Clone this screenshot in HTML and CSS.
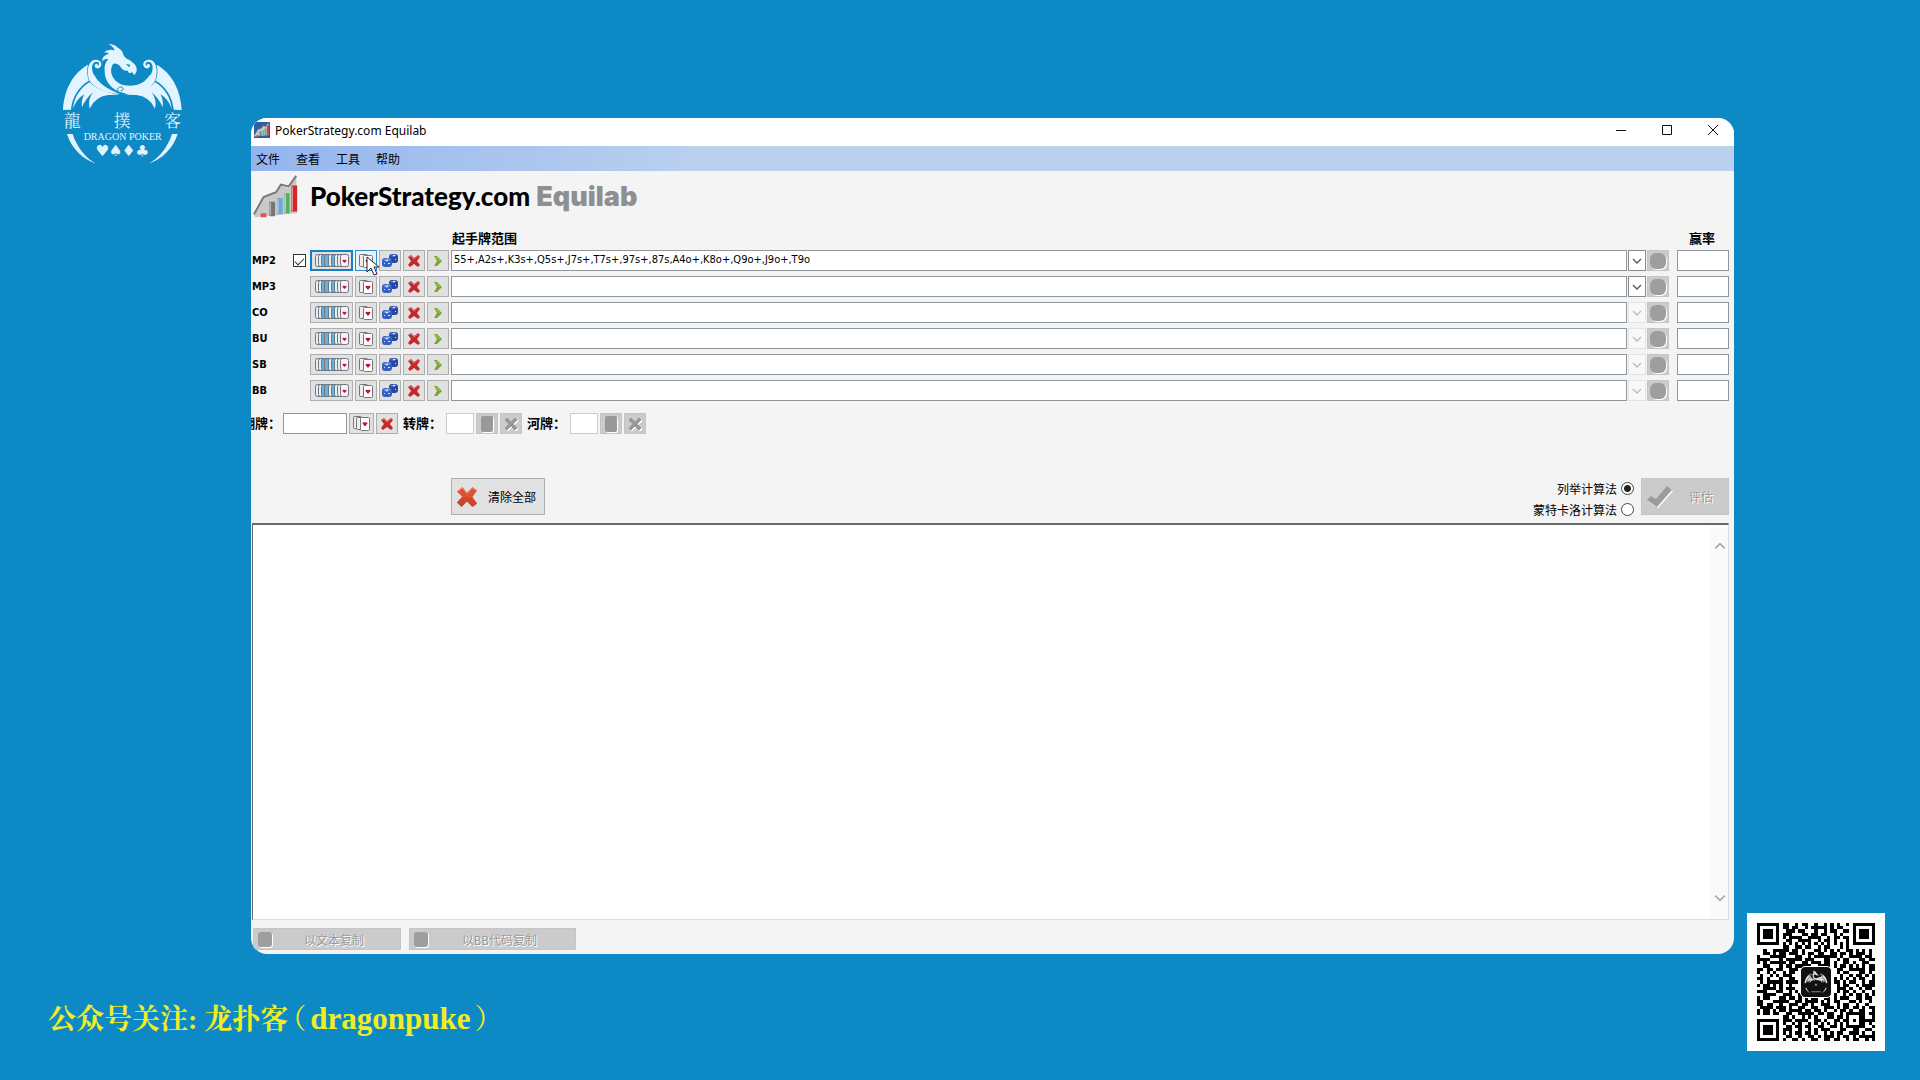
FILE: index.html
```html
<!DOCTYPE html>
<html lang="zh-CN">
<head>
    <meta charset="UTF-8">
    <meta name="viewport" content="width=device-width, initial-scale=1.0">
    <title>PokerStrategy.com Equilab</title>
    <link rel="stylesheet" href="styles.css">
</head>
<body>

<!-- Shared icons -->
<svg class="sprite" aria-hidden="true">
    <symbol id="chart" viewBox="0 0 50 50">
        <path d="M1 42 L11 24 L24 19 L29 12 L37 15 L45 1 L46 41 L2 45Z" fill="#c9c9c9"/>
        <path d="M1 42 L11 24 L24 19 L29 11 L37 13 L45 2" fill="none" stroke="#777" stroke-width="2"/>
        <path d="M8 41h6v4H8z" fill="#df5650"/>
        <path d="M17 29h6v15h-6z" fill="#777"/>
        <path d="M25 25h6v17h-6z" fill="#6ca8da"/>
        <path d="M33 20h5v21h-5z" fill="#4fae5a"/>
        <path d="M40 12h6v27h-6z" fill="#d3262b"/>
        <path d="M18 30v13M26 26v15M34 21v19M41 13v25" stroke="#fff" stroke-opacity=".6"/>
    </symbol>
    <symbol id="range" viewBox="0 0 34 14">
        <g fill="#e8edf0" stroke="#6c7782">
            <rect x=".5" y=".5" width="8" height="12" rx="2"/>
            <rect x="3.5" y=".5" width="8" height="12" rx="2"/>
            <rect x="6.5" y=".5" width="8" height="12" rx="2" fill="#69b0df"/>
            <rect x="9.5" y=".5" width="8" height="12" rx="2" fill="#69b0df"/>
            <rect x="13.5" y=".5" width="8" height="12" rx="2"/>
            <rect x="16.5" y=".5" width="8" height="12" rx="2" fill="#69b0df"/>
            <rect x="19.5" y=".5" width="8" height="12" rx="2"/>
            <rect x="22.5" y=".5" width="8" height="12" rx="2"/>
            <rect x="25.5" y=".5" width="8" height="12" rx="2" fill="#fbf0f3"/>
        </g>
        <path d="M29.500 9l-2-2q0-2 2-1q2-1 2 1z" fill="#b8173c"/>
    </symbol>
    <symbol id="cards" viewBox="0 0 14 14">
        <rect x=".5" y=".5" width="8" height="12" rx="1" fill="#eee" stroke="#777"/>
        <rect x="4.500" y="1.500" width="9" height="12" rx="1" fill="#fff" stroke="#777"/>
        <path d="M9 10L6.500 7q0-2 2.500-1q2.500-1 2.500 1z" fill="#b8173c"/>
    </symbol>
    <symbol id="flop" viewBox="0 0 17 15">
        <rect x=".5" y=".5" width="8" height="12" rx="1" fill="#eee" stroke="#777"/>
        <rect x="3.500" y="1.500" width="8" height="12" rx="1" fill="#eee" stroke="#777"/>
        <rect x="7.500" y="1.500" width="9" height="13" rx="1" fill="#fff" stroke="#777"/>
        <path d="M12 10.500L9.500 7.500q0-2 2.500-1q2.500-1 2.500 1z" fill="#b8173c"/>
    </symbol>
    <symbol id="dice" viewBox="0 0 18 14">
        <rect x="8" y="0" width="9" height="9" rx="3" fill="#2549a3"/>
        <path d="M9 2q4-3 7-1l-3 2z" fill="#6585d2"/>
        <rect x="1" y="4" width="10" height="9" rx="3" fill="#3560bd"/>
        <path d="M2 6q4-3 8-1L6 8z" fill="#7c9de6"/>
        <path d="M3 9h1v1H3zM7 9h2v1H7zM5 6h2v1H5zM14 5h1v1h-1zM12 1h2v1h-2z" fill="#dbe7ff"/>
    </symbol>
    <symbol id="cross" viewBox="0 0 14 14">
        <path d="M1 3l3-2 3 3 4-3 2 2-3 4 3 4-2 2-4-3-4 3-2-2 3-4z" fill="#c22b2e"/>
        <path d="M2 3l2-1 3 3 4-3" stroke="#df6b65" fill="none"/>
    </symbol>
    <symbol id="arrow" viewBox="0 0 10 12">
        <path d="M1 1h3l5 5-5 5H1l3-5z" fill="#7ba52f"/>
        <path d="M3 2l4 4" fill="none" stroke="#a8cf67"/>
    </symbol>
    <symbol id="down" viewBox="0 0 10 6">
        <path d="M1 1l4 4 4-4" fill="none" stroke="currentColor" stroke-width="1.300"/>
    </symbol>
    <symbol id="chip" viewBox="0 0 16 16">
        <rect width="16" height="16" rx="6" fill="#9e9e9e"/>
    </symbol>
    <symbol id="page" viewBox="0 0 14 15">
        <rect width="14" height="15" rx="3" fill="#9e9e9e"/>
    </symbol>
    <symbol id="card" viewBox="0 0 12 16">
        <rect width="12" height="16" rx="2" fill="#999"/>
    </symbol>
    <symbol id="grey-cross" viewBox="0 0 14 14">
        <path d="M1 3l2-2 4 4 4-4 2 2-4 4 4 4-2 2-4-4-4 4-2-2 4-4z" fill="#999" stroke="#999"/>
    </symbol>
    <symbol id="big-cross" viewBox="0 0 24 24">
        <path d="M1 6l6-5 5 6 6-6 5 4-5 7 5 7-5 4-6-6-6 6-5-5 6-6z" fill="#dc5334"/>
        <path d="M6 12l-5 6 5 5 6-6 6 6 5-4-5-6z" fill="#bd3a20" opacity=".5"/>
        <path d="M2 6l5-4 5 6 6-6 4 3" fill="none" stroke="#f0997e"/>
    </symbol>
    <symbol id="check" viewBox="0 0 26 22">
        <path d="M0 14l4-4 5 3L20 0l5 4-15 17z" fill="#9c9c9c"/>
    </symbol>
</svg>

<header class="brand">
    <svg class="brand-logo" viewBox="0 0 480 450" role="img" aria-label="龍撲客 Dragon Poker">
        <defs>
            <g id="wing">
                <path d="M69 240C72 178 100 128 144 104C140 122 141 137 147 152C116 169 96 202 93 239Z"/>
                <path d="M149 156C119 175 101 204 99 236Q109 207 133 193C126 205 124 218 126 232Q136 207 159 187Q142 210 149 236Q164 201 204 195L238 194C200 187 166 177 149 156Z"/>
                <path d="M148 151C139 122 144 90 167 89C184 89 190 105 178 114C169 119 160 109 166 103C170 99 175 103 173 108C181 104 177 94 168 95C153 97 153 121 163 136C174 157 200 178 240 192C203 190 163 178 148 151Z"/>
                <path d="M81 312H98C110 350 135 382 167 401C127 387 94 354 81 312Z"/>
            </g>
        </defs>
        <g fill="#e2f4ff">
            <use href="#wing"/>
            <use href="#wing" transform="translate(494 0) scale(-1 1)"/>
            <path d="M204 41Q224 42 234 53Q248 61 249 72Q252 83 270 91L284 103Q293 115 289 126L283 136L277 127L268 130L263 122Q247 123 240 108Q220 92 215 111C207 135 226 158 249 165C288 173 316 158 329 135L343 150C331 185 284 199 250 189C217 182 193 154 194 123Q191 103 205 87Q190 85 187 96Q184 76 207 71Q196 65 190 68Q205 55 224 61Q219 47 204 41Z"/>
        </g>
        <path d="M258 101l13 4-4 7Z" fill="#0d89c5"/>
        <path d="M236 186C229 179 235 170 244 171C253 174 249 184 242 182" fill="none" stroke="#0d89c5" stroke-width="3"/>
        <g class="brand-chars">
            <text x="97" y="291">龍</text>
            <text x="246" y="291">撲</text>
            <text x="398" y="291">客</text>
        </g>
        <text class="brand-name" x="248" y="331">DRAGON POKER</text>
        <g class="brand-suits">
            <text x="187" y="379">♥</text>
            <text x="227" y="379">♠</text>
            <text x="266" y="379">♦</text>
            <text x="307" y="379">♣</text>
        </g>
    </svg>
</header>

<main class="window">
    <div class="titlebar">
        <svg class="app-icon" viewBox="0 0 50 50"><rect width="50" height="50" fill="#315e9f"/><use href="#chart"/></svg>
        <span class="window-title">PokerStrategy.com Equilab</span>
        <button class="win-btn" aria-label="最小化"><svg viewBox="0 0 12 12"><path d="M1 6.500h10"/></svg></button>
        <button class="win-btn" aria-label="最大化"><svg viewBox="0 0 12 12"><path d="M1.500 1.500h9v9h-9z"/></svg></button>
        <button class="win-btn" aria-label="关闭"><svg viewBox="0 0 12 12"><path d="M1 1l10 10M11 1L1 11"/></svg></button>
    </div>

    <nav class="menubar">
        <a href="#">文件</a>
        <a href="#">查看</a>
        <a href="#">工具</a>
        <a href="#">帮助</a>
    </nav>

    <div class="product">
        <svg class="product-icon"><use href="#chart"/></svg>
        <h1>PokerStrategy.com <span>Equilab</span></h1>
    </div>

    <div class="columns">
        <span class="col-range">起手牌范围</span>
        <span class="col-equity">赢率</span>
    </div>

    <div class="players" id="players"></div>

    <div class="board">
        <div class="flop-label"><label for="flop">翻牌：</label></div>
        <input class="field flop-field" type="text" id="flop">
        <button class="tool wide" aria-label="选择翻牌"><svg width="17" height="15"><use href="#flop"/></svg></button>
        <button class="tool" aria-label="清除翻牌"><svg width="14" height="14"><use href="#cross"/></svg></button>
        <label class="street" for="turn">转牌：</label>
        <input class="field card-field" type="text" id="turn" disabled>
        <button class="tool" aria-label="选择转牌" disabled><svg width="12" height="16"><use href="#card"/></svg></button>
        <button class="tool" aria-label="清除转牌" disabled><svg width="14" height="14"><use href="#grey-cross"/></svg></button>
        <label class="street" for="river">河牌：</label>
        <input class="field card-field" type="text" id="river" disabled>
        <button class="tool" aria-label="选择河牌" disabled><svg width="12" height="16"><use href="#card"/></svg></button>
        <button class="tool" aria-label="清除河牌" disabled><svg width="14" height="14"><use href="#grey-cross"/></svg></button>
    </div>

    <div class="actions">
        <button class="action clear-btn"><svg width="22" height="22"><use href="#big-cross"/></svg><span>清除全部</span></button>
        <div class="methods">
            <label>列举计算法 <input type="radio" name="method" checked></label>
            <label>蒙特卡洛计算法 <input type="radio" name="method"></label>
        </div>
        <button class="action eval-btn" disabled><svg width="26" height="22"><use href="#check"/></svg><span>评估</span></button>
    </div>

    <div class="output">
        <textarea aria-label="计算结果"></textarea>
        <div class="scrollbar">
            <svg class="up" width="12" height="8"><use href="#down"/></svg>
            <svg width="12" height="8"><use href="#down"/></svg>
        </div>
    </div>

    <div class="copy-bar">
        <button class="copy-btn" disabled><svg width="14" height="15"><use href="#page"/></svg><span>以文本复制</span></button>
        <button class="copy-btn copy-bb" disabled><svg width="14" height="15"><use href="#page"/></svg><span>以BB代码复制</span></button>
    </div>

    <svg class="cursor" viewBox="0 0 13 20"><path d="M1 1v15l4-4 3 7 3-1-3-7h5z" fill="#fff" stroke="#223" stroke-width="1"/></svg>
</main>

<footer class="caption">公众号关注: 龙扑客<span class="bracket">（</span><span class="account">dragonpuke</span><span class="bracket">）</span></footer>

<aside class="qr">
    <svg id="qr-code" viewBox="0 0 37 37" shape-rendering="crispEdges" role="img" aria-label="公众号二维码"></svg>
    <div class="qr-badge"><svg viewBox="60 35 374 370"><g fill="#ddd"><use href="#wing"/><use href="#wing" transform="translate(494 0) scale(-1 1)"/><path d="M204 41Q248 55 249 72L289 120L263 122Q220 92 215 111C207 135 226 158 249 165L329 135L343 150C331 185 284 199 250 189C217 182 193 154 194 123Q191 103 205 87Z"/><path d="M175 365h145v18H175zM230 250h32v30h-32z" fill="#888"/></g></svg></div>
</aside>

<script src="script.js"></script>
</body>
</html>
```

FILE: styles.css
```css
* {
    margin: 0;
    padding: 0;
    box-sizing: border-box;
}

body {
    min-height: 100vh;
    display: grid;
    grid-template-columns: 251px 1fr 186px;
    grid-template-rows: 118px 1fr 126px;
    background-color: #0d89c5;
    color: #000;
    font-family: "DejaVu Sans Condensed", "Noto Sans CJK SC", sans-serif;
    font-size: 12px;
}

button,
input,
textarea {
    font: inherit;
    color: inherit;
}

svg {
    display: block;
    flex: none;
}

.sprite {
    position: absolute;
    width: 0;
    height: 0;
}

/* Dragon logo */
.brand {
    grid-column: 1;
    grid-row: 1 / 3;
    padding: 30px 0 0 40px;
}

.brand-logo {
    width: 160px;
    height: 150px;
}

.brand-logo text {
    fill: #e2f4ff;
    text-anchor: middle;
}

.brand-chars {
    font-family: "Noto Serif CJK TC", "Noto Sans CJK TC", sans-serif;
    font-size: 50px;
}

.brand-name {
    font-family: "Liberation Serif", serif;
    font-size: 30px;
}

.brand-suits {
    font-family: "DejaVu Sans", sans-serif;
    font-size: 46px;
}

/* Window */
.window {
    grid-column: 2;
    grid-row: 2;
    position: relative;
    display: flex;
    flex-direction: column;
    background-color: #f4f4f4;
    border-radius: 16px;
    overflow: hidden;
}

.titlebar {
    height: 28px;
    display: flex;
    align-items: center;
    background-color: #fff;
    padding: 0 5px 4px 3px;
}

.app-icon {
    width: 16px;
    height: 16px;
    margin-right: 5px;
}

.window-title {
    flex: 1;
    font-family: "Noto Sans", sans-serif;
    font-size: 12px;
}

.win-btn {
    width: 32px;
    height: 24px;
    margin-left: 14px;
    display: flex;
    align-items: center;
    justify-content: center;
    border: none;
    background: none;
}

.win-btn svg {
    width: 12px;
    height: 12px;
    fill: none;
    stroke: #111;
}

.menubar {
    height: 25px;
    display: flex;
    align-items: center;
    gap: 16px;
    padding-left: 5px;
    background: linear-gradient(to right, #94b4ee, #b9d1ee 30%);
}

.menubar a {
    color: #000;
    text-decoration: none;
}

.product {
    height: 56px;
    display: flex;
    align-items: flex-start;
    padding: 2px;
}

.product-icon {
    width: 48px;
    height: 50px;
}

.product h1 {
    margin-left: 9px;
    font-family: Lato, sans-serif;
    font-size: 26px;
    font-weight: 900;
    line-height: 46px;
    white-space: nowrap;
}

.product h1 span {
    font-family: Inter, sans-serif;
    font-size: 27px;
    color: #8f8f8f;
}

.columns {
    height: 23px;
    display: flex;
    justify-content: space-between;
    padding: 3px 19px 0 201px;
    font-size: 13px;
    font-weight: bold;
    line-height: 17px;
}

/* Player rows */
.players {
    display: flex;
    flex-direction: column;
    gap: 5px;
    padding-right: 5px;
}

.player {
    height: 21px;
    display: flex;
    align-items: stretch;
    gap: 2px;
}

.player-label {
    width: 40px;
    padding-left: 1px;
    font-size: 11px;
    font-weight: bold;
    line-height: 21px;
}

.player-check {
    width: 15px;
    display: flex;
    align-items: center;
}

.player-check input {
    appearance: none;
    width: 13px;
    height: 13px;
    border: 1px solid #333;
    background-color: #fff;
    display: flex;
    align-items: center;
    justify-content: center;
}

.player-check input:checked::before {
    content: "";
    width: 8px;
    height: 4px;
    border-left: 1px solid #333;
    border-bottom: 1px solid #333;
    transform: rotate(-45deg);
}

.tool {
    width: 22px;
    height: 21px;
    flex: none;
    display: flex;
    align-items: center;
    justify-content: center;
    border: 1px solid #adadad;
    background-color: #e1e1e1;
}

.tool.wide {
    width: 25px;
}

.tool.range {
    width: 43px;
}

.tool.current {
    border: 2px solid #187dc1;
}

.tool.hover {
    border-color: #2d8bc9;
    background-color: #e5f1fb;
}

.tool:disabled,
.action:disabled,
.copy-btn:disabled {
    border-color: #c5c5c5;
    background-color: #cbcbcb;
    color: #9b9b9b;
    text-shadow: 1px 1px #fff;
}

.tool:disabled svg,
.action:disabled svg,
.copy-btn:disabled svg {
    filter: drop-shadow(1px 1px 0 #fff);
}

.field {
    height: 21px;
    min-width: 0;
    border: 1px solid #8f969c;
    background-color: #fff;
    padding: 0 2px 2px;
    line-height: 16px;
}

.field:disabled {
    border-color: #ccc;
}

.hand-field {
    flex: 1;
    font-size: 11px;
}

.drop {
    width: 18px;
    display: flex;
    align-items: center;
    justify-content: center;
    border: 1px solid #8b8b8b;
    background-color: #fff;
    color: #555;
}

.drop:disabled {
    border-color: #e3e3e3;
    background-color: #f8f8f8;
    color: #bbb;
}

.combo {
    flex: 1;
    display: flex;
    gap: 1px;
}

.equity {
    width: 52px;
    margin-left: 6px;
}

/* Board cards */
.board {
    display: flex;
    gap: 2px;
    padding-top: 12px;
    font-size: 13px;
    font-weight: bold;
    line-height: 21px;
}

.flop-label {
    width: 30px;
    display: flex;
    justify-content: flex-end;
    overflow: hidden;
    white-space: nowrap;
}

.flop-field {
    width: 64px;
}

.street {
    width: 43px;
    padding-left: 2px;
    white-space: nowrap;
}

.card-field {
    width: 28px;
}

.board .tool + .street {
    margin-left: 1px;
}

/* Action row */
.actions {
    display: flex;
    margin-top: 44px;
    padding: 0 5px 0 200px;
}

.action {
    height: 37px;
    display: flex;
    align-items: center;
    border: 1px solid #adadad;
    background-color: #e1e1e1;
}

.clear-btn {
    width: 94px;
    gap: 10px;
    padding-left: 4px;
}

.eval-btn {
    width: 88px;
    gap: 16px;
    padding-left: 5px;
}

.methods {
    margin-left: auto;
    margin-right: 7px;
    display: flex;
    flex-direction: column;
    align-items: flex-end;
}

.methods label {
    height: 21px;
    display: flex;
    align-items: center;
    gap: 4px;
}

.methods input {
    appearance: none;
    width: 13px;
    height: 13px;
    border: 1px solid #444;
    border-radius: 50%;
    background-color: #fff;
}

.methods input:checked {
    background: radial-gradient(circle, #222 3px, #fff 4px);
}

/* Result text */
.output {
    flex: 1;
    display: flex;
    margin: 3px 5px 0 1px;
    border: 1px solid #ddd;
    border-top: 2px solid #696969;
    border-left-color: #696969;
    background-color: #fff;
}

.output textarea {
    flex: 1;
    border: none;
    outline: none;
    resize: none;
    background: none;
}

.scrollbar {
    width: 17px;
    display: flex;
    flex-direction: column;
    justify-content: space-between;
    align-items: center;
    padding: 17px 0;
    background-color: #fafafa;
    color: #aaa;
}

.up {
    transform: rotate(180deg);
}

.copy-bar {
    display: flex;
    gap: 8px;
    padding: 8px 2px 4px;
}

.copy-btn {
    width: 148px;
    height: 22px;
    display: flex;
    align-items: center;
    padding: 0 4px;
    border: 1px solid #c5c5c5;
}

.copy-btn span {
    flex: 1;
    text-align: center;
}

.copy-bb {
    width: 167px;
}

.cursor {
    position: absolute;
    left: 115px;
    top: 138px;
    width: 13px;
    height: 20px;
}

/* Account caption */
.caption {
    grid-column: 1 / 3;
    grid-row: 3;
    display: flex;
    align-items: baseline;
    padding: 43px 0 0 48px;
    font-family: "Liberation Serif", "Noto Serif CJK SC", "Noto Sans CJK SC", serif;
    font-size: 28px;
    font-weight: bold;
    line-height: 44px;
    color: #f2ed20;
}

.bracket {
    margin: 0 4px;
    font-weight: normal;
    font-feature-settings: "halt" 1;
}

.account {
    font-size: 31px;
}

/* QR code */
.qr {
    grid-column: 3;
    grid-row: 2 / 4;
    align-self: end;
    position: relative;
    width: 138px;
    margin: 0 0 29px 13px;
    padding: 10px;
    background-color: #fff;
}

.qr-badge {
    position: absolute;
    left: 53px;
    top: 53px;
    width: 32px;
    height: 32px;
    padding: 3px;
    border: 1px solid #fff;
    border-radius: 5px;
    background-color: #111;
}
```

FILE: script.js
```js
const players = [
    { name: "MP2", range: "55+,A2s+,K3s+,Q5s+,J7s+,T7s+,97s+,87s,A4o+,K8o+,Q9o+,J9o+,T9o", active: true, list: true },
    { name: "MP3", range: "", list: true },
    { name: "CO", range: "" },
    { name: "BU", range: "" },
    { name: "SB", range: "" },
    { name: "BB", range: "" }
];

function icon(name, width, height) {
    return `<svg width="${width}" height="${height}"><use href="#${name}"/></svg>`;
}

// Player rows
document.getElementById("players").innerHTML = players.map(p => `
    <div class="player">
        <label class="player-label" for="hand-${p.name}">${p.name}</label>
        <div class="player-check">${p.active ? `<input type="checkbox" aria-label="${p.name}" checked>` : ""}</div>
        <button class="tool range ${p.active ? "current" : ""}" aria-label="选择范围">${icon("range", 34, 14)}</button>
        <button class="tool ${p.active ? "hover" : ""}" aria-label="选择手牌">${icon("cards", 14, 14)}</button>
        <button class="tool" aria-label="随机手牌">${icon("dice", 18, 14)}</button>
        <button class="tool" aria-label="清除">${icon("cross", 14, 14)}</button>
        <button class="tool" aria-label="更多">${icon("arrow", 10, 12)}</button>
        <div class="combo">
            <input class="field hand-field" type="text" id="hand-${p.name}" value="${p.range}">
            <button class="drop" aria-label="历史" ${p.list ? "" : "disabled"}>${icon("down", 10, 6)}</button>
            <button class="tool" aria-label="保存" disabled>${icon("chip", 16, 16)}</button>
        </div>
        <input class="field equity" type="text" aria-label="${p.name} 赢率" readonly>
    </div>
`).join("");

// QR modules, one string per row
const modules = [
    "#######.##..#.##..#..#.#.#..#.#######",
    "#.....#.##.##..#.#####.#.##...#.....#",
    "#.###.#..###.##...#..#.##..##.#.###.#",
    "#.###.#.###...##.##.##..#.#...#.###.#",
    "#.###.#.#.####..####..#.##.##.#.###.#",
    "#.....#..##..####..#.##.#...#.#.....#",
    "#######.#.#.#.#.#.#.#.#.#.#.#.#######",
    "........##..##.##..#.##...#.#........",
    "..#..#####.##.#...##.#.#.#..##.#.#.#.",
    "..##.#.##.###.#.##.##..##.##.#.###.#.",
    "#...#####...##..#.#######.#..####.##.",
    "####...#.#####.###...##..#.##...##.##",
    "#.#.#####.##..##.###.##.#..##.#..##..",
    "..##...#.##.#####..####.#.##.#.#.#.##",
    "##.##.##..###............##..#####.##",
    "#..#.#..#.##.............#.##...##.#.",
    ".#..#.#.###...............#..#.##.#.#",
    "##.#...#..##............#.#.#.#.##..#",
    ".#.#####.####...........##.#.##..#.##",
    "#.##.#.#..#..............#.##..#.####",
    "..####.#.###.............###.#..#.##.",
    "###...##..#.#............#.##.#..#..#",
    "..####..###..#..........#..#.#.##.#.#",
    "#.##...##.##.#.#.##..##.#.###..##.##.",
    "##...#####..##.####.#.#.##...##.#..#.",
    "##.##..#..###.##.#..###..#.##..#..#..",
    ".####.###.#..##..##..###.#.##.##.#.##",
    "#.##.#.##.####.##.##.#..#.##.#..##..#",
    "#.##.##..##..#####.##.##..#.######.##",
    "........##.#..#.#.#...##.##.#...##..#",
    "#######.###.####..##.#..##.##.#.#####",
    "#.....#.#..#.#..#.#.#.#.#.#.#...##.#.",
    "#.###.#..##.##.##..##..##.#.######..#",
    "#.###.#.###..#..#.#.###...##..##..##.",
    "#.###.#.#.#.##.##.#..#.#.##..###.#..#",
    "#.....#..##..#..##.#.###.#.##.#.#####",
    "#######.#..##.#..##..##.##..#.##..#.#"
];

const path = modules.map((row, y) =>
    [...row].map((m, x) => m === "#" ? `M${x} ${y}h1v1h-1z` : "").join("")
).join("");
document.getElementById("qr-code").innerHTML = `<path d="${path}"/>`;
```
